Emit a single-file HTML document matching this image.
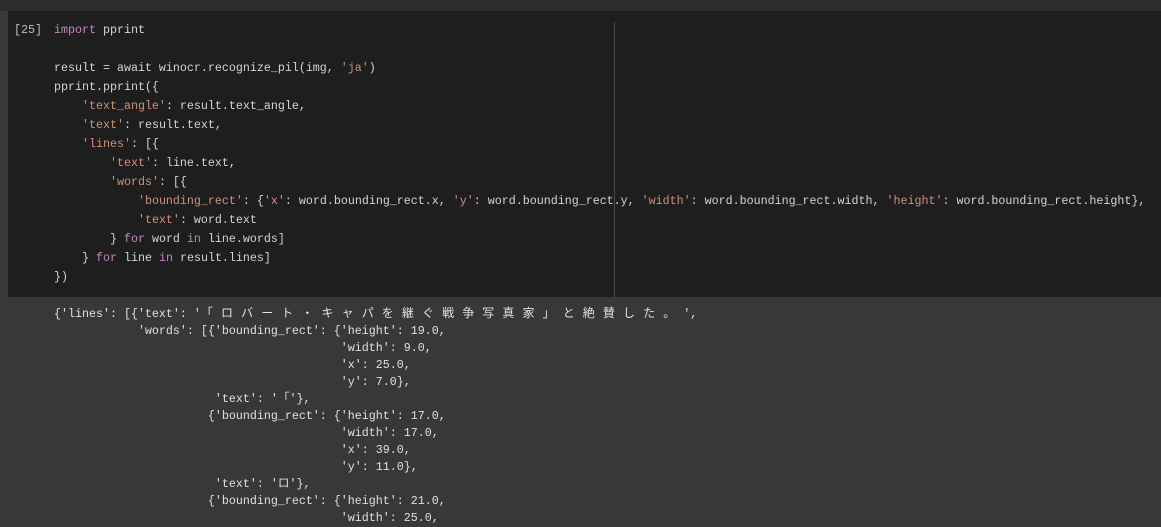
<!DOCTYPE html>
<html><head><meta charset="utf-8"><style>
html,body{margin:0;padding:0;width:1161px;height:525px;overflow:hidden;background:#383838;}
.top{position:absolute;left:0;top:0;width:1161px;height:11px;background:#2c2c2c;}
.cell{position:absolute;left:8px;top:11px;width:1153px;height:286px;background:#1e1e1e;}
.ruler{position:absolute;left:614px;top:22px;width:1px;height:275px;background:#4a4a4a;}
pre{margin:0;font-family:"Liberation Mono","Noto Sans CJK JP",monospace;font-size:11.67px;color:#d4d4d4;}
.code{position:absolute;left:54px;top:21px;line-height:19px;}
.num{position:absolute;left:14px;top:21px;line-height:19px;color:#bdbdbd;}
.out{position:absolute;left:54px;top:306px;line-height:17px;color:#e0e0e0;}
.k{color:#c586c0}.s{color:#ce9178}
.j{letter-spacing:8.1px;font-size:12px;}
</style></head><body>
<div class="top"></div>
<div class="cell"></div>
<div class="ruler"></div>
<pre class="num">[25]</pre>
<pre class="code"><span class="k">import</span> pprint

result = await winocr.recognize_pil(img, <span class="s">'ja'</span>)
pprint.pprint({
    <span class="s">'text_angle'</span>: result.text_angle,
    <span class="s">'text'</span>: result.text,
    <span class="s">'lines'</span>: [{
        <span class="s">'text'</span>: line.text,
        <span class="s">'words'</span>: [{
            <span class="s">'bounding_rect'</span>: {<span class="s">'x'</span>: word.bounding_rect.x, <span class="s">'y'</span>: word.bounding_rect.y, <span class="s">'width'</span>: word.bounding_rect.width, <span class="s">'height'</span>: word.bounding_rect.height},
            <span class="s">'text'</span>: word.text
        } <span class="k">for</span> word <span class="k">in</span> line.words]
    } <span class="k">for</span> line <span class="k">in</span> result.lines]
})</pre>
<pre class="out">{'lines': [{'text': '<span class="j">「ロバート・キャパを継ぐ戦争写真家」と絶賛した。</span>',
            'words': [{'bounding_rect': {'height': 19.0,
                                         'width': 9.0,
                                         'x': 25.0,
                                         'y': 7.0},
                       'text': '「'},
                      {'bounding_rect': {'height': 17.0,
                                         'width': 17.0,
                                         'x': 39.0,
                                         'y': 11.0},
                       'text': 'ロ'},
                      {'bounding_rect': {'height': 21.0,
                                         'width': 25.0,</pre>
</body></html>
